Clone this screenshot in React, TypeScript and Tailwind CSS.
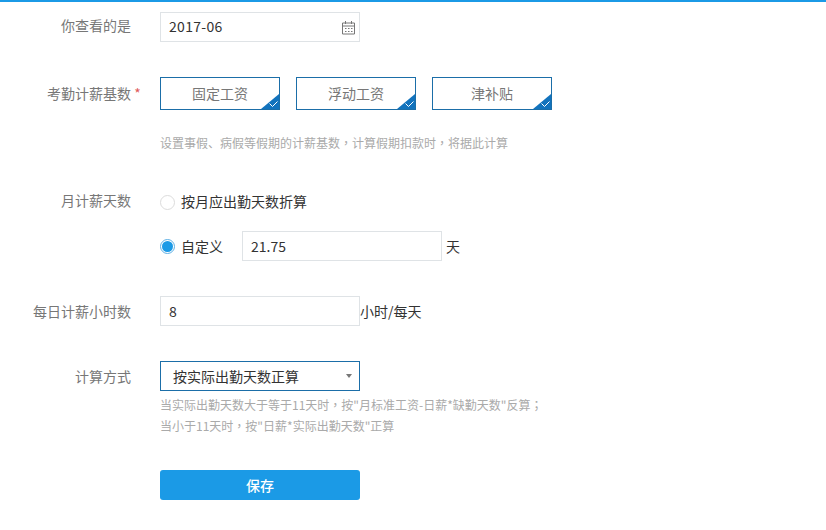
import { ReactNode } from "react";

const font = "font-['Noto_Sans_CJK_SC','Noto_Sans',sans-serif]";

function Label({ children, className = "" }: { children: ReactNode; className?: string }) {
  return <div className={`w-[131px] shrink-0 text-right text-sm text-[#777] ${className}`}>{children}</div>;
}

// centred full-width punctuation, as in the screenshot
function Punct({ children }: { children: ReactNode }) {
  return <span className="font-['Noto_Sans_CJK_TC','Noto_Sans_CJK_SC',sans-serif]">{children}</span>;
}

function Basis({ name }: { name: string }) {
  return (
    <button className="relative h-[33px] w-[120px] overflow-hidden border border-[#1b6ea8] bg-white pb-[2px] text-sm text-[#777]">
      {name}
      <svg className="absolute right-0 bottom-0" width="18" height="15" viewBox="0 0 18 15">
        <path d="M18 0V15H0Z" fill="#1273bd" />
        <path d="M8.500 9.500L11.500 12.500L16.500 7.500" fill="none" stroke="#fff" strokeWidth="1" />
      </svg>
    </button>
  );
}

function CalendarIcon() {
  return (
    <svg width="15" height="15" viewBox="0 0 15 15" fill="none" stroke="#777" strokeWidth="1">
      <path d="M1.500 3H13.500V14H1.500ZM1.500 6H13.500" />
      <path d="M4.500 1V4M10.500 1V4" />
      <path d="M4 8.500h1.500M7 8.500h1.500M10 8.500h1.500M4 11.500h1.500M7 11.500h1.500M10 11.500h1.500" />
    </svg>
  );
}

export default function App() {
  return (
    <div className={`${font} h-[530px] w-[826px] overflow-hidden border-t-2 border-[#1b9ae6] bg-white`}>
      <div className="flex flex-col pt-[10px]">
        <div className="flex h-[30px] items-center gap-[29px]">
          <Label className="pb-[4px]">你查看的是</Label>
          <div className="flex h-[30px] w-[200px] items-center justify-between border border-[#dfe3e6] pr-[3px] pl-2 text-sm text-[#333]">
            <span className="pb-[2px] tracking-[0.3px]">2017-06</span>
            <CalendarIcon />
          </div>
        </div>

        <div className="mt-[35px] flex h-[33px] items-center gap-[29px]">
          <div className="w-[131px] shrink-0 pb-[2px] pl-[47px] text-sm whitespace-nowrap text-[#777]">
            考勤计薪基数 <span className="text-[#e05a5a]">*</span>
          </div>
          <div className="flex gap-4">
            <Basis name="固定工资" />
            <Basis name="浮动工资" />
            <Basis name="津补贴" />
          </div>
        </div>

        <p className="mt-[24px] ml-[160px] text-xs leading-[17px] text-[#aaa]">
          设置事假、病假等假期的计薪基数<Punct>，</Punct>计算假期扣款时<Punct>，</Punct>将据此计算
        </p>

        <div className="mt-[41px] flex h-[20px] items-center gap-[29px]">
          <Label className="pb-[4px]">月计薪天数</Label>
          <label className="flex items-center gap-[6px] text-sm text-[#333]">
            <span className="h-[15px] w-[15px] rounded-full border border-[#dcdcdc] bg-white" />
            <span className="pb-[2px]">按月应出勤天数折算</span>
          </label>
        </div>

        <div className="mt-[19px] ml-[160px] flex h-[30px] items-center">
          <label className="flex w-[82px] items-center gap-[6px] text-sm text-[#333]">
            <span className="flex h-[15px] w-[15px] items-center justify-center rounded-full border border-[#5eb0e5]">
              <span className="h-[11px] w-[11px] rounded-full bg-[#1b9ae6]" />
            </span>
            自定义
          </label>
          <div className="flex h-[30px] w-[200px] items-center border border-[#dfe3e6] pl-2 text-sm text-[#333]">21.75</div>
          <span className="ml-1 text-sm text-[#333]">天</span>
        </div>

        <div className="mt-[35px] flex h-[30px] items-center gap-[29px]">
          <Label>每日计薪小时数</Label>
          <div className="flex h-[30px] w-[200px] items-center border border-[#dfe3e6] pl-2 text-sm text-[#333]">8</div>
          <span className="-ml-[29px] text-sm text-[#333]">小时/每天</span>
        </div>

        <div className="mt-[35px] flex h-[30px] items-center gap-[29px]">
          <Label>计算方式</Label>
          <div className="flex h-[30px] w-[200px] items-center justify-between border border-[#1b6ea8] pr-[7px] pl-3 text-sm text-[#333]">
            按实际出勤天数正算
            <span className="h-0 w-0 border-x-[3px] border-t-[4px] border-x-transparent border-t-[#777]" />
          </div>
        </div>

        <p className="mt-[3px] ml-[160px] text-xs leading-[21px] whitespace-nowrap text-[#aaa]">
          当实际出勤天数大于等于11天时<Punct>，</Punct>按"月标准工资-日薪*缺勤天数"反算<Punct>；</Punct>
          <br />
          当小于11天时<Punct>，</Punct>按"日薪*实际出勤天数"正算
        </p>

        <button className="mt-[34px] ml-[160px] h-[30px] w-[200px] rounded-[3px] bg-[#1b9ae6] text-sm font-medium text-white">
          保存
        </button>
      </div>
    </div>
  );
}
